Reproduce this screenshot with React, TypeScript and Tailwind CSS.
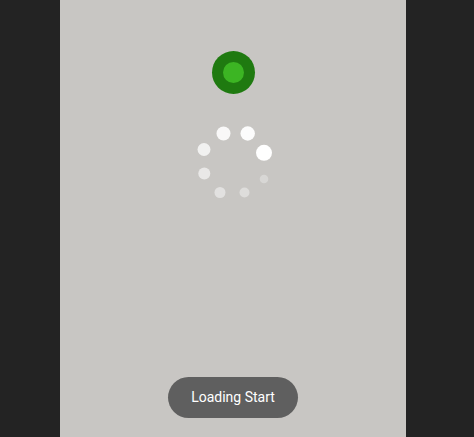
import React from "react";

type Dot = { x: number; y: number; r: number; o: number };

// spinner dots, clockwise from the top-left, fading toward the tail
const dots: Dot[] = [
  { x: 30.5, y: 10.5, r: 7, o: 0.88 },
  { x: 54.7, y: 10.5, r: 7.2, o: 0.95 },
  { x: 71, y: 29.8, r: 8, o: 1 },
  { x: 71, y: 56, r: 4.3, o: 0.3 },
  { x: 51.5, y: 69.5, r: 5, o: 0.4 },
  { x: 27, y: 69.5, r: 5.5, o: 0.48 },
  { x: 11.3, y: 50.5, r: 6, o: 0.6 },
  { x: 11, y: 26.5, r: 6.5, o: 0.75 },
];

export default function App() {
  return (
    <div
      className="flex h-[437px] w-[474px] bg-[#232323] pl-[60px]"
      style={{ fontFamily: "Roboto, 'Noto Sans', sans-serif" }}
    >
      <div className="flex h-full w-[346px] flex-col items-center bg-[#c8c6c3] pt-[51px] pb-[19px]">
        <div className="flex h-[43px] w-[43px] items-center justify-center rounded-full bg-[#1f7a10]">
          <div className="h-[21px] w-[21px] rounded-full bg-[#3cb523]" />
        </div>

        <svg width="80" height="80" viewBox="0 0 80 80" className="mt-[29px]">
          {dots.map((d, i) => (
            <circle key={i} cx={d.x} cy={d.y} r={d.r} fill="#ffffff" fillOpacity={d.o} />
          ))}
        </svg>

        <div className="flex-1" />

        <button className="flex h-[41px] w-[130px] items-center justify-center rounded-full bg-[#5f5f5f] text-[14px] text-white">
          Loading Start
        </button>
      </div>
    </div>
  );
}
